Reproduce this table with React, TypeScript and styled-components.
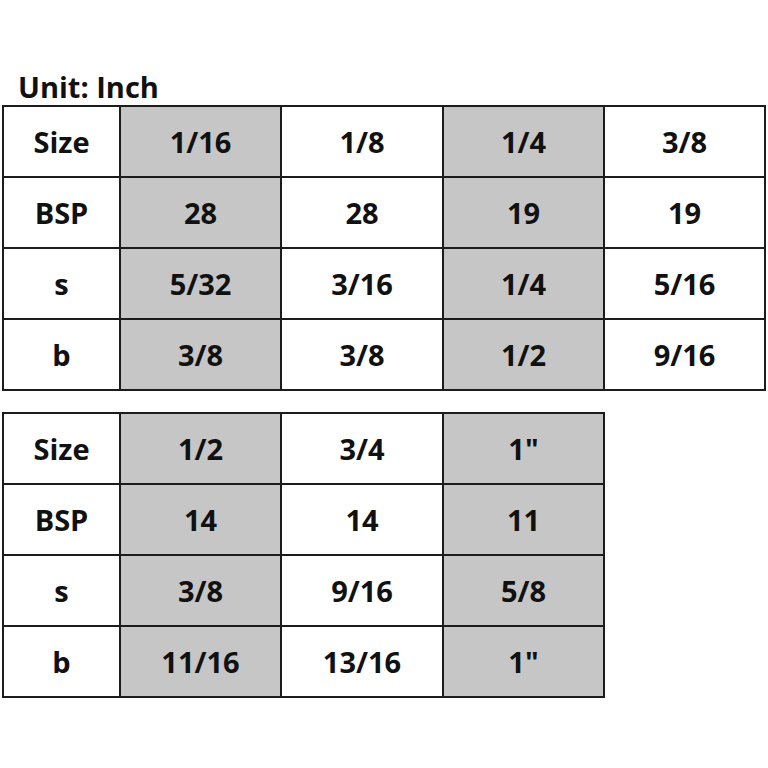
import React from "react";
import styled, { createGlobalStyle } from "styled-components";

const Global = createGlobalStyle`
  html, body { margin: 0; padding: 0; background: #ffffff; }
  body { font-family: "Open Sans", "Noto Sans", sans-serif; color: #111111; }
`;

const Page = styled.div`
  width: 768px;
  height: 768px;
  padding: 71px 0 0 2px;
  box-sizing: border-box;
  display: flex;
  flex-direction: column;
`;

const Title = styled.div`
  font-size: 29px;
  font-weight: 700;
  line-height: 32px;
  margin-left: 16px;
  color: #111111;
`;

const Grid = styled.div<{ $cols: number; $mt: number }>`
  display: grid;
  grid-template-columns: ${(p) => ["115px", "159px", "160px", "159px", "159px"].slice(0, p.$cols).join(" ")};
  grid-auto-rows: 69px;
  gap: 2px;
  padding: 2px;
  background: #1c1c1c;
  width: max-content;
  margin-top: ${(p) => p.$mt}px;
`;

const Cell = styled.div<{ $shade: boolean }>`
  background: ${(p) => (p.$shade ? "#c6c6c6" : "#ffffff")};
  display: flex;
  align-items: center;
  justify-content: center;
  font-size: 29px;
  font-weight: 700;
  color: #111111;
`;

const table1 = [
  ["Size", "1/16", "1/8", "1/4", "3/8"],
  ["BSP", "28", "28", "19", "19"],
  ["s", "5/32", "3/16", "1/4", "5/16"],
  ["b", "3/8", "3/8", "1/2", "9/16"],
];

const table2 = [
  ["Size", "1/2", "3/4", "1\""],
  ["BSP", "14", "14", "11"],
  ["s", "3/8", "9/16", "5/8"],
  ["b", "11/16", "13/16", "1\""],
];

function Table({ rows, mt }: { rows: string[][]; mt: number }) {
  return (
    <Grid $cols={rows[0].length} $mt={mt}>
      {rows.flatMap((r, i) =>
        r.map((c, j) => (
          <Cell key={`${i}-${j}`} $shade={j === 1 || j === 3}>
            {c}
          </Cell>
        ))
      )}
    </Grid>
  );
}

export default function App() {
  return (
    <>
      <Global />
      <Page>
        <Title>Unit: Inch</Title>
        <Table rows={table1} mt={2} />
        <Table rows={table2} mt={21} />
      </Page>
    </>
  );
}
